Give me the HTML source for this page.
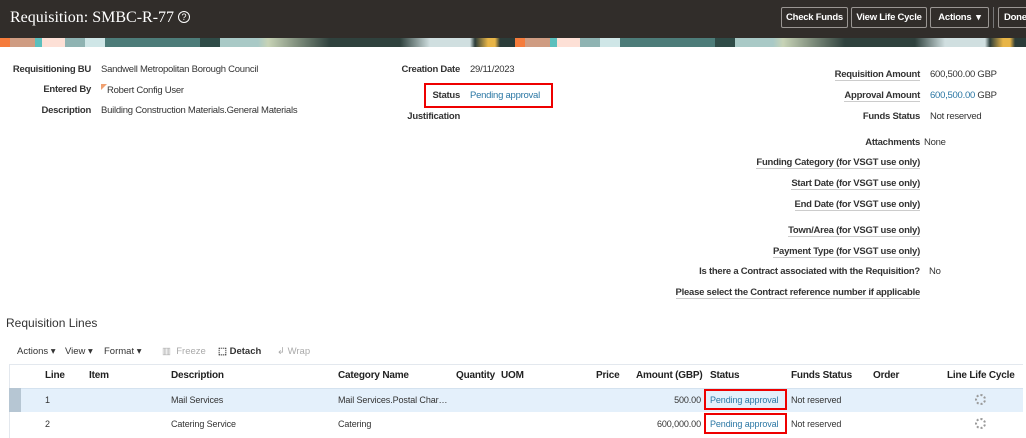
<!DOCTYPE html>
<html><head><meta charset="utf-8"><style>
*{margin:0;padding:0;box-sizing:border-box}
body{width:1026px;height:438px;overflow:hidden;background:#fff;font-family:"Liberation Sans",Arial,sans-serif;font-size:9.5px;letter-spacing:-0.25px;color:#333;position:relative}
.a{position:absolute;white-space:nowrap}
.hdr{position:absolute;left:0;top:0;width:1026px;height:38px;background:#312d2a}
.ban{position:absolute;left:0;top:38px;width:1026px;height:9px;background:linear-gradient(90deg,#f57c3c 0,#f57c3c 10px,#cf9c82 10px,#cf9c82 35px,#5bbfbd 35px,#5bbfbd 42px,#fde0d6 42px,#fde0d6 65px,#8fb3b2 65px,#8fb3b2 85px,#cfe6e7 85px,#cfe6e7 105px,#4d7c79 105px,#4d7c79 200px,#2f4b47 200px,#2f4b47 220px,#a9c9c6 220px,#a9c9c6 258px,#c7d3b6 268px,#2f413d 330px,#2f413d 400px,#d0dfe0 430px,#d0dfe0 470px,#2b3c39 475px,#e8b547 488px,#e8b547 495px,#2b3c39 500px,#2b3c39 515px);background-size:515px 9px}
.t{font-family:"Liberation Serif",serif;font-size:16px;letter-spacing:0;color:#fff;left:10px;top:9px}
.btn{position:absolute;top:7px;height:21px;border:1px solid #9a9693;border-radius:2px;color:#fff;font-weight:bold;font-size:9.5px;line-height:19px;text-align:center;overflow:hidden}
.l{font-weight:bold;text-align:right}
.lk{color:#2b77a4}
.u{border-bottom:1px solid #ccc}
.th{font-weight:bold;font-size:10px;letter-spacing:-0.2px;color:#222}
.r{font-size:9px;letter-spacing:-0.1px}
.red{position:absolute;border:2px solid #e00}
.tb{font-size:9.5px;letter-spacing:0}
</style></head><body>
<div class="hdr"></div><div class="ban"></div>
<div class="a t">Requisition: SMBC-R-77 <span style="display:inline-block;width:12px;height:12px;border:1.2px solid #fff;border-radius:50%;font-family:'Liberation Sans';font-size:9px;text-align:center;line-height:10px;vertical-align:2px">?</span></div>
<div class="btn" style="left:781px;width:67px">Check Funds</div>
<div class="btn" style="left:851px;width:76px">View Life Cycle</div>
<div class="btn" style="left:930px;width:59px">Actions &nbsp;▾</div>
<div style="position:absolute;left:993px;top:7px;width:1px;height:21px;background:#777"></div>
<div class="btn" style="left:998px;width:40px;text-align:left;padding-left:5px">Done</div>

<div class="a l" style="right:935px;top:64px">Requisitioning BU</div><div class="a" style="left:101px;top:64px">Sandwell Metropolitan Borough Council</div>
<div class="a l" style="right:935px;top:84px">Entered By</div><div class="a" style="left:101px;top:84px"><span style="display:inline-block;width:0;height:0;border-top:6px solid #f0a070;border-right:6px solid transparent;vertical-align:3px"></span>Robert Config User</div>
<div class="a l" style="right:935px;top:105px">Description</div><div class="a" style="left:101px;top:105px">Building Construction Materials.General Materials</div>

<div class="a l" style="right:566px;top:64px">Creation Date</div><div class="a" style="left:470px;top:64px">29/11/2023</div>
<div class="red" style="left:424px;top:83px;width:129px;height:25px"></div>
<div class="a l" style="right:566px;top:90px">Status</div><div class="a lk" style="left:470px;top:90px">Pending approval</div>
<div class="a l" style="right:566px;top:111px">Justification</div>

<div class="a l u" style="right:106px;top:69px">Requisition Amount</div><div class="a" style="left:930px;top:69px">600,500.00 GBP</div>
<div class="a l u" style="right:106px;top:90px">Approval Amount</div><div class="a" style="left:930px;top:90px"><span class="lk">600,500.00</span> GBP</div>
<div class="a l" style="right:106px;top:111px">Funds Status</div><div class="a" style="left:930px;top:111px">Not reserved</div>
<div class="a l" style="right:106px;top:137px">Attachments</div><div class="a" style="left:924px;top:137px">None</div>
<div class="a l u" style="right:106px;top:157px">Funding Category (for VSGT use only)</div>
<div class="a l u" style="right:106px;top:178px">Start Date (for VSGT use only)</div>
<div class="a l u" style="right:106px;top:199px">End Date (for VSGT use only)</div>
<div class="a l u" style="right:106px;top:225px">Town/Area (for VSGT use only)</div>
<div class="a l u" style="right:106px;top:246px">Payment Type (for VSGT use only)</div>
<div class="a l" style="right:106px;top:266px">Is there a Contract associated with the Requisition?</div><div class="a" style="left:929px;top:266px">No</div>
<div class="a l u" style="right:106px;top:287px">Please select the Contract reference number if applicable</div>

<div class="a" style="left:6px;top:316px;font-size:12px;letter-spacing:0;color:#333">Requisition Lines</div>
<div class="a tb" style="left:17px;top:346px">Actions ▾</div>
<div class="a tb" style="left:65px;top:346px">View ▾</div>
<div class="a tb" style="left:104px;top:346px">Format ▾</div>
<div class="a tb" style="left:162px;top:346px;color:#aaa">▥ &nbsp;Freeze</div>
<div class="a tb" style="left:218px;top:346px;font-weight:bold;color:#333">⬚ Detach</div>
<div class="a tb" style="left:277px;top:346px;color:#aaa">↲ Wrap</div>
<div style="position:absolute;left:9px;top:364px;width:1014px;height:1px;background:#e3e8ee"></div>
<div style="position:absolute;left:9px;top:364px;width:1px;height:74px;background:#e3e8ee"></div>
<div class="a th" style="left:45px;top:370px">Line</div>
<div class="a th" style="left:89px;top:370px">Item</div>
<div class="a th" style="left:171px;top:370px">Description</div>
<div class="a th" style="left:338px;top:370px">Category Name</div>
<div class="a th" style="left:456px;top:370px">Quantity</div>
<div class="a th" style="left:501px;top:370px">UOM</div>
<div class="a th" style="left:596px;top:370px">Price</div>
<div class="a th" style="left:636px;top:370px">Amount (GBP)</div>
<div class="a th" style="left:710px;top:370px">Status</div>
<div class="a th" style="left:791px;top:370px">Funds Status</div>
<div class="a th" style="left:873px;top:370px">Order</div>
<div class="a th" style="left:947px;top:370px">Line Life Cycle</div>
<div style="position:absolute;left:9px;top:388px;width:1014px;height:24px;background:#e4f0fb;border-top:1px solid #d4e2ef"></div>
<div style="position:absolute;left:9px;top:388px;width:12px;height:24px;background:#b6c6d3"></div>
<div class="a r" style="left:45px;top:395px">1</div>
<div class="a r" style="left:171px;top:395px">Mail Services</div>
<div class="a r" style="left:338px;top:395px">Mail Services.Postal Char…</div>
<div class="a r" style="right:325px;top:395px">500.00</div>
<div class="a r" style="left:791px;top:395px">Not reserved</div>
<div class="a r" style="left:45px;top:419px">2</div>
<div class="a r" style="left:171px;top:419px">Catering Service</div>
<div class="a r" style="left:338px;top:419px">Catering</div>
<div class="a r" style="right:325px;top:419px">600,000.00</div>
<div class="a r" style="left:791px;top:419px">Not reserved</div>
<div class="red" style="left:704px;top:389px;width:83px;height:21px"></div>
<div class="a lk r" style="left:710px;top:395px">Pending approval</div>
<div class="red" style="left:704px;top:413px;width:83px;height:21px"></div>
<div class="a lk r" style="left:710px;top:419px">Pending approval</div>
<div style="position:absolute;left:975px;top:394px;width:11px;height:11px;border:2px dotted #999;border-radius:50%"></div>
<div style="position:absolute;left:975px;top:418px;width:11px;height:11px;border:2px dotted #999;border-radius:50%"></div>
</body></html>
